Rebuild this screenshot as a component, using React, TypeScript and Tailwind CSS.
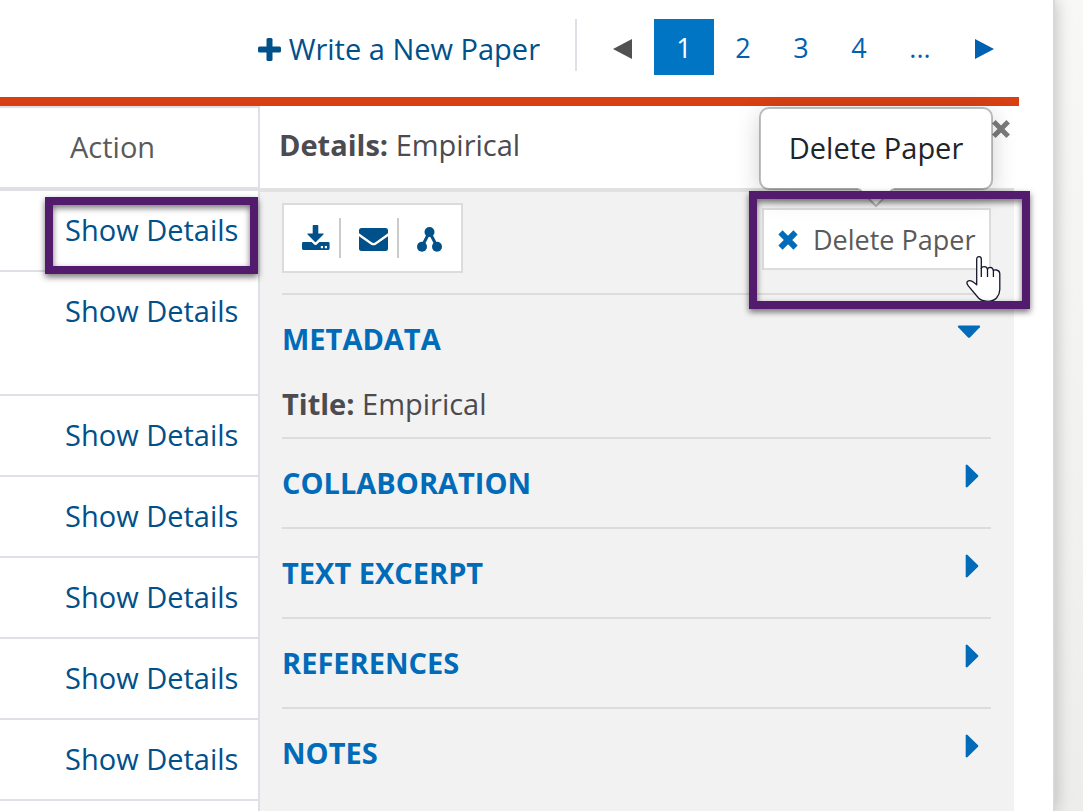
import { useState } from "react";

type Section = {
  id: string;
  title: string;
};

const SECTIONS: Section[] = [
  { id: "metadata", title: "METADATA" },
  { id: "collaboration", title: "COLLABORATION" },
  { id: "excerpt", title: "TEXT EXCERPT" },
  { id: "references", title: "REFERENCES" },
  { id: "notes", title: "NOTES" },
];

const ROWS = [
  { id: 1, tall: false, highlighted: true },
  { id: 2, tall: true, highlighted: false },
  { id: 3, tall: false, highlighted: false },
  { id: 4, tall: false, highlighted: false },
  { id: 5, tall: false, highlighted: false },
  { id: 6, tall: false, highlighted: false },
  { id: 7, tall: false, highlighted: false },
];

const PAGES = ["2", "3", "4"];

function PlusIcon({ className }: { className: string }) {
  return (
    <svg viewBox="0 0 23 23" className={className} fill="currentColor" aria-hidden="true">
      <rect x="8.5" y="0" width="6" height="23" rx="1.5" />
      <rect x="0" y="8.5" width="23" height="6" rx="1.5" />
    </svg>
  );
}

function CrossIcon({ className, stroke }: { className: string; stroke: number }) {
  return (
    <svg viewBox="0 0 20 20" className={className} fill="none" stroke="currentColor" strokeWidth={stroke} strokeLinecap="square" aria-hidden="true">
      <path d="M4.6 4.6 15.4 15.4M15.4 4.6 4.6 15.4" />
    </svg>
  );
}

function DownloadIcon() {
  return (
    <svg viewBox="0 0 28 26" className="h-[26px] w-7" fill="currentColor" aria-hidden="true">
      <path d="M11.5 0h4q.8 0 .8.8V8.6h4.6q1.4 0 .5 1l-7.2 7.2q-.7.7-1.4 0L5.6 9.6q-.9-1 .5-1h4.6V.8q0-.8.8-.8Z" />
      <path
        fillRule="evenodd"
        d="M1.4 17h8.2l2.6 2.4q1.3 1 2.6 0L17.4 17h8.8q1.4 0 1.4 1.4v5.2q0 1.4-1.4 1.4H1.4Q0 25 0 23.6v-5.2Q0 17 1.4 17Zm17.4 4v2.2h2.2V21Zm4 0v2.2H25V21Z"
      />
    </svg>
  );
}

function MailIcon() {
  return (
    <svg viewBox="0 0 29 23" className="h-[23px] w-[29px]" fill="currentColor" aria-hidden="true">
      <path d="M2.5 0h24Q29 0 29 2.5V5.2L16.4 14.2q-1.9 1.4-3.8 0L0 5.2V2.5Q0 0 2.5 0Z" />
      <path d="M0 8.2 11.8 16.4q2.7 1.7 5.4 0L29 8.2V20.5Q29 23 26.5 23h-24Q0 23 0 20.5Z" />
    </svg>
  );
}

function ShareIcon() {
  return (
    <svg viewBox="0 0 25 25" className="size-[25px]" fill="currentColor" aria-hidden="true">
      <path d="M12.5 5 5 19.5M12.5 5 20 19.5" stroke="currentColor" strokeWidth="3" />
      <circle cx="12.5" cy="5" r="5" />
      <circle cx="5" cy="19.8" r="5" />
      <circle cx="20" cy="19.8" r="5" />
    </svg>
  );
}

function PointerIcon() {
  return (
    <svg viewBox="0 0 35 46" className="h-[46px] w-[35px]" aria-hidden="true">
      <path
        d="M10.7 28.8V3.2Q10.7.7 13 .7t2.300 2.500V12.500Q15.800 10.700 18 10.700 21 10.700 21.500 13.200 22.300 11.400 24.200 11.400 26.900 11.500 27.400 14.600 28.300 13.500 30.500 14 33.800 14.800 33.800 18V33.500Q33.800 38 30.500 42 27.500 45.300 21.500 45.300 15.500 45.200 12.500 42L2.500 30.200Q-.2 26.700 1.700 25.200 4.500 23 10.700 28.800Z"
        fill="#fff"
        stroke="#15152b"
        strokeWidth="1.3"
        strokeLinejoin="round"
      />
      <path d="M15.3 12v9M21.500 13v8M27.400 14.500V21" fill="none" stroke="#15152b" strokeWidth="1.3" />
    </svg>
  );
}

function HighlightBox({ className }: { className: string }) {
  return (
    <div
      className={`pointer-events-none absolute border-8 border-[#521b6e] drop-shadow-[0_3px_3px_rgba(0,0,0,0.55)] ${className}`}
    />
  );
}

function Caret({ open }: { open: boolean }) {
  return open ? (
    <svg viewBox="0 0 24 14" className="h-3.5 w-6" fill="currentColor" aria-hidden="true">
      <path d="M1.8.5h20.4q1.8.3.6 1.7L13.2 12.2q-1.2 1.1-2.4 0L1.2 2.2Q0 .8 1.8.5Z" />
    </svg>
  ) : (
    <svg viewBox="0 0 14 24" className="mr-0.5 h-6 w-3.5" fill="currentColor" aria-hidden="true">
      <path d="M.7 1.5Q1-.2 2.6.9L12.8 11q1 1 0 2L2.6 23.1Q1 24.2.7 22.5Z" />
    </svg>
  );
}

function Header() {
  return (
    <header className="flex h-[97px] items-start justify-end pt-[19px]">
      <a href="#new" className="mr-[35px] flex items-center gap-2 pt-2.5 text-[#00508a]">
        <PlusIcon className="size-[23px]" />
        <span className="text-[29px] leading-10">Write a New Paper</span>
      </a>
      <div className="mr-[13px] h-[52px] w-0.5 bg-[#dee0e6]" />
      <nav aria-label="Pages" className="mr-[3px] flex h-14 items-center text-[27px] leading-10 text-[#0061b0]">
        <button type="button" aria-label="Previous page" className="flex w-16 justify-center pt-1 text-[#515151]">
          <svg viewBox="0 0 19 20" className="h-5 w-[19px]" fill="currentColor" aria-hidden="true">
            <path d="M19 0v20L0 10Z" />
          </svg>
        </button>
        <button type="button" aria-current="page" className="h-14 w-[60px] bg-[#0075c4] pt-0.5 text-white">
          1
        </button>
        {PAGES.map((page) => (
          <button key={page} type="button" className="w-[58px] pt-0.5">
            {page}
          </button>
        ))}
        <span className="w-16 pt-0.5 text-center">...</span>
        <button type="button" aria-label="Next page" className="flex w-16 justify-center pt-1">
          <svg viewBox="0 0 19 20" className="h-5 w-[19px]" fill="currentColor" aria-hidden="true">
            <path d="M0 0v20l19-10Z" />
          </svg>
        </button>
      </nav>
    </header>
  );
}

function ActionTable() {
  return (
    <table className="w-[258px] border-separate border-spacing-0 self-start text-left text-[29px] leading-10">
      <thead>
        <tr>
          <th className="h-[85px] border-t-2 border-b-4 border-[#dee0e6] pb-0.5 pl-[70px] font-normal text-[#5a5a5a]">
            Action
          </th>
        </tr>
      </thead>
      <tbody>
        {ROWS.map((row) => (
          <tr key={row.id}>
            <td
              className={`relative border-b-2 border-[#dee0e6] pt-[19px] pl-[65px] align-top whitespace-nowrap ${
                row.tall ? "h-[124px]" : "h-[81px]"
              }`}
            >
              <a href="#details" className="text-[#00508a]">
                Show Details
              </a>
              {row.highlighted ? <HighlightBox className="top-1.5 right-0 left-[45px] h-[77px]" /> : null}
            </td>
          </tr>
        ))}
      </tbody>
    </table>
  );
}

function DeleteButton() {
  return (
    <div className="relative mt-[5px]">
      <button
        type="button"
        aria-describedby="delete-tip"
        className="flex h-[62px] w-[229px] items-center gap-[15px] border-2 border-[#dcdcdc] bg-white pt-0.5 pl-3.5 text-[27px] whitespace-nowrap text-[#5a5a5a]"
      >
        <CrossIcon className="size-5 text-[#006bb8]" stroke={6} />
        Delete Paper
      </button>
      <div
        id="delete-tip"
        role="tooltip"
        className="absolute -top-[101px] -right-0.5 -left-[3px] flex h-[83px] items-center justify-center rounded-[10px] border-2 border-black/25 bg-white bg-clip-padding pb-0.5 text-[29px] whitespace-nowrap text-[#212529] shadow-[0_6px_24px_rgba(0,0,0,0.18)]"
      >
        Delete Paper
        <svg viewBox="0 0 36 20" className="absolute top-[79px] left-[97px] h-5 w-9" aria-hidden="true">
          <path d="M0 0h36L18 18Z" fill="#fff" />
          <path d="M1 1l17 17L35 1" fill="none" stroke="#b4b4b4" strokeWidth="2" />
        </svg>
      </div>
      <div className="pointer-events-none absolute top-12 left-[204px]">
        <PointerIcon />
      </div>
      <HighlightBox className="-top-[17px] -right-[39px] -bottom-[39px] -left-[13px]" />
    </div>
  );
}

function DetailsPanel() {
  const [openId, setOpenId] = useState("metadata");

  return (
    <section className="mr-[5px] flex flex-1 flex-col border-l-2 border-[#dee0e6] text-[29px] text-[#4b4b50]">
      <div className="flex h-[86px] items-start justify-between border-b-4 border-[#e1e1e1] pt-[19px] pr-[3px] pl-[19px]">
        <p className="leading-10">
          <strong>Details:</strong> Empirical
        </p>
        <button type="button" aria-label="Close details" className="-mt-1.5 text-[#7b7b7b]">
          <CrossIcon className="size-5" stroke={5} />
        </button>
      </div>

      <div className="flex-1 bg-[#f2f2f2] pt-[11px] pr-[23px] pl-[22px]">
        <div className="flex items-start justify-between border-b-2 border-[#dcdcdc] pb-5">
          <div className="flex h-[70px] w-[181px] items-center border-2 border-[#dcdcdc] bg-white text-[#00508a]">
            <button type="button" aria-label="Download" className="flex h-10 w-[57px] items-center justify-end border-r-2 border-[#cbcbcb] pr-[9px]">
              <DownloadIcon />
            </button>
            <button type="button" aria-label="Email" className="flex h-10 w-[58px] items-center justify-end border-r-2 border-[#cbcbcb] pt-0.5 pr-[9px]">
              <MailIcon />
            </button>
            <button type="button" aria-label="Share" className="flex h-10 flex-1 items-center pt-0.5 pl-[18px]">
              <ShareIcon />
            </button>
          </div>
          <DeleteButton />
        </div>

        {SECTIONS.map((section) => {
          const open = section.id === openId;
          return (
            <div key={section.id} className="border-b-2 border-[#dcdcdc] last:border-b-0">
              <h2>
                <button
                  type="button"
                  aria-expanded={open}
                  onClick={() => setOpenId(open ? "" : section.id)}
                  className="flex h-[88px] w-full items-center justify-between pr-2.5 font-bold text-[#006bb8]"
                >
                  {section.title}
                  <span className="mb-3.5">
                    <Caret open={open} />
                  </span>
                </button>
              </h2>
              {open ? (
                <p className="pt-px pb-[13px] leading-10">
                  <strong>Title:</strong> Empirical
                </p>
              ) : null}
            </div>
          );
        })}
      </div>
    </section>
  );
}

export default function App() {
  return (
    <div className="flex min-h-screen bg-linear-to-b from-[#f8f8f6] to-[#ededeb] font-['Open_Sans',sans-serif]">
      <main className="mr-7 flex flex-1 flex-col border-r-2 border-[#d8d8d8] bg-white pr-[34px] shadow-[0_0_16px_rgba(0,0,0,0.25)]">
        <Header />
        <div className="h-[9px] bg-[#d84013]" />
        <div className="flex flex-1">
          <ActionTable />
          <DetailsPanel />
        </div>
      </main>
    </div>
  );
}
